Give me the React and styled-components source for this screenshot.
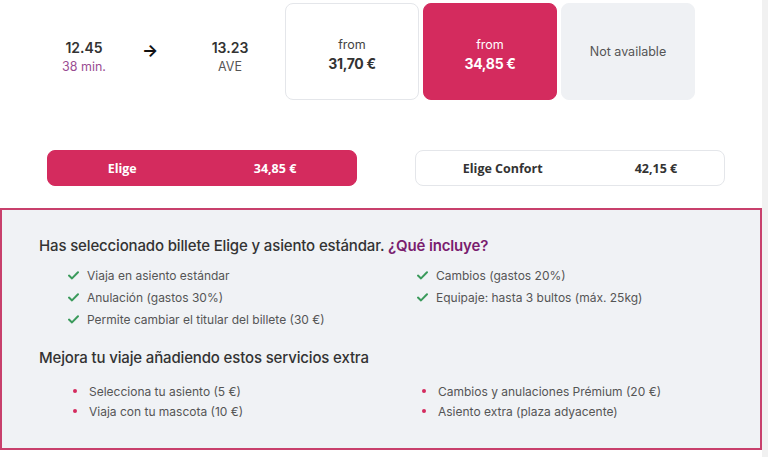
import styled, { createGlobalStyle } from 'styled-components'

const GlobalStyle = createGlobalStyle`
  html, body {
    margin: 0;
    padding: 0;
    background: #ffffff;
    overflow: hidden;
  }
  * {
    box-sizing: border-box;
  }
`

const colors = {
  primary: '#d42b5e',
  purple: '#7a1d6f',
  duration: '#9a4d92',
  text: '#333333',
  muted: '#555555',
  panel: '#f0f2f5',
  border: '#e4e6ea',
}

const Page = styled.div`
  display: flex;
  width: 768px;
  height: 457px;
  font-family: Inter, 'Liberation Sans', sans-serif;
  color: ${colors.text};
`

const Main = styled.div`
  width: 762px;
  display: flex;
  flex-direction: column;
  padding-top: 3px;
`

const Scrollbar = styled.div`
  width: 6px;
  background: #f1f1f1;
`

const TrainRow = styled.div`
  display: flex;
  align-items: center;
  height: 97px;
`

const Times = styled.div`
  display: grid;
  grid-template-columns: 100px 32px 114px;
  align-items: center;
  padding-left: 34px;
  padding-top: 10px;
  margin-right: 5px;
`

const TimeCol = styled.div`
  display: flex;
  flex-direction: column;
  align-items: center;
  gap: 3px;
  padding-left: ${(props) => (props.shift ? '14px' : '0')};
`

const Hour = styled.span`
  font-size: 14px;
  font-weight: 600;
  color: ${colors.text};
`

const Sub = styled.span`
  font-size: 12.5px;
  color: ${(props) => (props.accent ? colors.duration : colors.muted)};
`

const Arrow = styled.span`
  font-size: 17px;
  font-weight: 700;
  text-align: center;
  color: #111;
  margin-top: -14px;
`

const Fares = styled.div`
  display: flex;
  gap: 4px;
  height: 97px;
`

const FareCard = styled.div`
  width: 134px;
  height: 97px;
  border-radius: 8px;
  display: flex;
  flex-direction: column;
  align-items: center;
  justify-content: center;
  gap: 3px;
  padding-top: ${(props) => (props.disabled ? 0 : 6)}px;
  background: ${(props) =>
    props.selected ? colors.primary : props.disabled ? '#eff1f4' : '#ffffff'};
  border: 1px solid
    ${(props) =>
      props.selected ? colors.primary : props.disabled ? '#eff1f4' : colors.border};
  color: ${(props) => (props.selected ? '#ffffff' : colors.text)};
`

const FromLabel = styled.span`
  font-size: 12.5px;
  color: ${(props) => (props.light ? '#ffffff' : '#444444')};
`

const FarePrice = styled.span`
  font-size: 14px;
  font-weight: 700;
  letter-spacing: -0.3px;
`

const NotAvailable = styled.span`
  font-size: 12.5px;
  color: #555;
`

const ChoiceRow = styled.div`
  display: flex;
  gap: 58px;
  padding-left: 47px;
  margin-top: 50px;
`

const ChoiceButton = styled.button`
  width: 310px;
  height: 36px;
  border-radius: 8px;
  display: flex;
  align-items: center;
  justify-content: center;
  gap: ${(props) => props.gap}px;
  font-family: 'Open Sans', 'Liberation Sans', sans-serif;
  font-size: 12.5px;
  font-weight: 700;
  cursor: pointer;
  padding: 0 0 0 ${(props) => props.shift || 0}px;
  background: ${(props) => (props.active ? colors.primary : '#ffffff')};
  color: ${(props) => (props.active ? '#ffffff' : '#333333')};
  border: 1px solid ${(props) => (props.active ? colors.primary : colors.border)};
`

const Panel = styled.section`
  margin-top: 22px;
  width: 762px;
  height: 242px;
  border: 2px solid #c8406c;
  background: ${colors.panel};
  padding: 26px 0 0 37px;
`

const Heading = styled.h2`
  margin: ${(props) => props.top || 0}px 0 0 0;
  font-size: 15px;
  font-weight: 500;
  line-height: 20px;
  letter-spacing: -0.15px;
  color: ${colors.text};
  & strong {
    color: ${colors.purple};
    font-weight: 600;
  }
`

const List = styled.ul`
  list-style: none;
  margin: ${(props) => props.top}px 0 0 0;
  padding: 0 0 0 29px;
  display: grid;
  grid-template-columns: 349px 300px;
  grid-auto-flow: column;
  grid-template-rows: repeat(${(props) => props.rows}, ${(props) => props.line}px);
`

const Item = styled.li`
  display: flex;
  align-items: center;
  gap: ${(props) => (props.dot ? 12 : 8)}px;
  padding-left: ${(props) => (props.dot ? 5 : 0)}px;
  font-size: 12px;
  color: ${colors.muted};
`

const Dot = styled.span`
  width: 4px;
  height: 4px;
  border-radius: 50%;
  background: ${colors.primary};
`

function Check() {
  return (
    <svg width="11" height="9" viewBox="0 0 11 9">
      <path
        d="M1 4.6 L4 7.4 L10 1.2"
        fill="none"
        stroke="#3a9a5b"
        strokeWidth="2"
        strokeLinecap="round"
        strokeLinejoin="round"
      />
    </svg>
  )
}

const included = [
  'Viaja en asiento estándar',
  'Anulación (gastos 30%)',
  'Permite cambiar el titular del billete (30 €)',
  'Cambios (gastos 20%)',
  'Equipaje: hasta 3 bultos (máx. 25kg)',
]

const extras = [
  'Selecciona tu asiento (5 €)',
  'Viaja con tu mascota (10 €)',
  'Cambios y anulaciones Prémium (20 €)',
  'Asiento extra (plaza adyacente)',
]

export default function App() {
  return (
    <>
      <GlobalStyle />
      <Page>
        <Main>
          <TrainRow>
            <Times>
              <TimeCol>
                <Hour>12.45</Hour>
                <Sub accent>38 min.</Sub>
              </TimeCol>
              <Arrow>→</Arrow>
              <TimeCol shift>
                <Hour>13.23</Hour>
                <Sub>AVE</Sub>
              </TimeCol>
            </Times>
            <Fares>
              <FareCard>
                <FromLabel>from</FromLabel>
                <FarePrice>31,70 €</FarePrice>
              </FareCard>
              <FareCard selected>
                <FromLabel light>from</FromLabel>
                <FarePrice>34,85 €</FarePrice>
              </FareCard>
              <FareCard disabled>
                <NotAvailable>Not available</NotAvailable>
              </FareCard>
            </Fares>
          </TrainRow>

          <ChoiceRow>
            <ChoiceButton active gap={117} shift={-9}>
              <span>Elige</span>
              <span>34,85 €</span>
            </ChoiceButton>
            <ChoiceButton gap={92}>
              <span>Elige Confort</span>
              <span>42,15 €</span>
            </ChoiceButton>
          </ChoiceRow>

          <Panel>
            <Heading>
              Has seleccionado billete Elige y asiento estándar.{' '}
              <strong>¿Qué incluye?</strong>
            </Heading>
            <List top={8} rows={3} line={22}>
              {included.map((text) => (
                <Item key={text}>
                  <Check />
                  {text}
                </Item>
              ))}
            </List>
            <Heading top={18}>
              Mejora tu viaje añadiendo estos servicios extra
            </Heading>
            <List top={13} rows={2} line={20}>
              {extras.map((text) => (
                <Item key={text} dot>
                  <Dot />
                  {text}
                </Item>
              ))}
            </List>
          </Panel>
        </Main>
        <Scrollbar />
      </Page>
    </>
  )
}
